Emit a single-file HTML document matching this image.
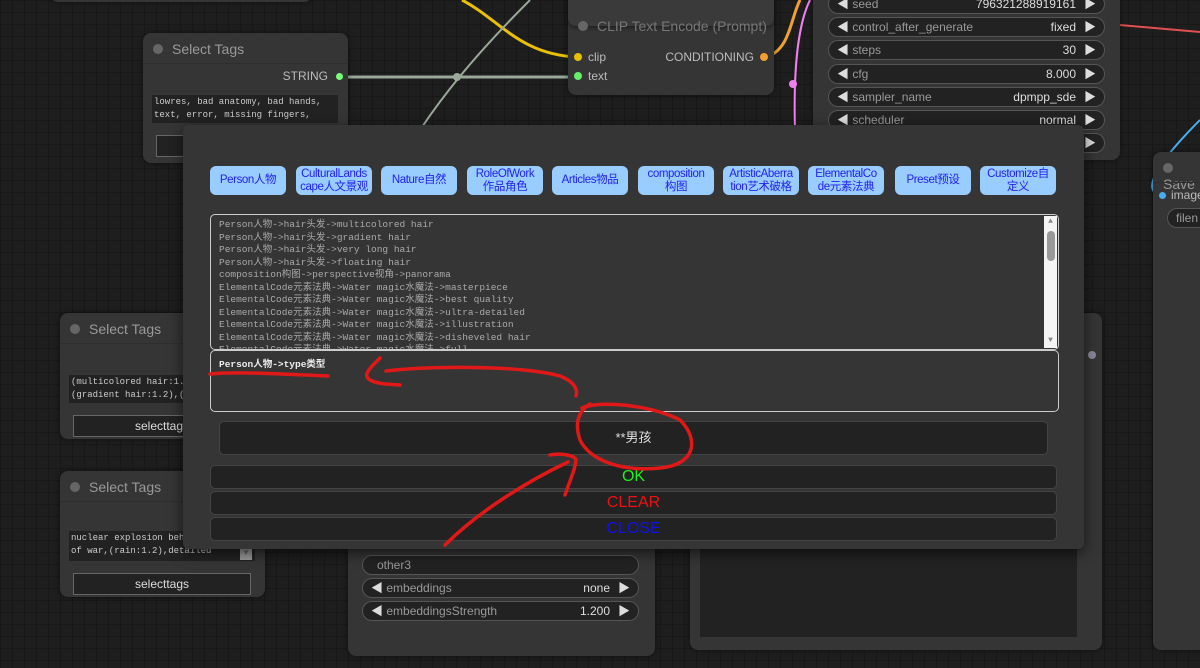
<!DOCTYPE html>
<html><head><meta charset="utf-8">
<style>
*{box-sizing:border-box;margin:0;padding:0}
body{width:1200px;height:668px;overflow:hidden;position:relative;background:#1e1e1e;
background-image:linear-gradient(#181818 1px,transparent 1px),linear-gradient(90deg,#181818 1px,transparent 1px);background-size:12px 12px;
font-family:"Liberation Sans","Noto Sans CJK SC",sans-serif;color:#aaa}
.abs{position:absolute}
.node{position:absolute;background:#353535;border-radius:8px;box-shadow:0 0 6px rgba(0,0,0,.5)}
.title{position:absolute;left:10px;top:8px;font-size:14px;color:#999}
.title:before{content:"";display:inline-block;width:10px;height:10px;border-radius:50%;background:#666;margin-right:9px;vertical-align:0}
.w{position:absolute;height:20px;border-radius:10px;background:#222;border:1px solid #555;font-size:12px;color:#999;line-height:18px;padding:0 8px}
.w .l:before{content:"◀ ";color:#ddd}
.w .v{position:absolute;right:28px;top:0;color:#ddd}
.w .r{position:absolute;right:8px;top:0;color:#ddd}
.mono{font-family:"Liberation Mono","Noto Sans CJK SC",monospace}
.btn{position:absolute;top:166px;width:76px;height:29px;background:#99ccff;border-radius:6px;color:#2222ee;font-size:11.5px;line-height:13px;text-align:center;display:flex;align-items:center;justify-content:center;letter-spacing:-.4px}
.bar{position:absolute;left:210px;width:847px;height:24px;background:#222;border:1px solid #444;border-radius:5px;text-align:center;font-size:16px;line-height:22px;padding-left:0}
</style></head><body>

<svg class="abs" style="left:0;top:0" width="1200" height="668">
<path d="M462 0 C500 20,520 55,578 57" stroke="#e8c000" stroke-width="3" fill="none"/>
<path d="M340 77 L578 77" stroke="#9aa89a" stroke-width="3" fill="none"/>
<path d="M530 0 C470 60,440 100,420 130" stroke="#9aa89a" stroke-width="2" fill="none"/>
<circle cx="457" cy="77" r="4" fill="#9aa89a"/>
<path d="M766 57 C790 50,790 20,800 0" stroke="#f0a030" stroke-width="3" fill="none"/>
<path d="M795 130 C793 60,800 20,810 0" stroke="#f080f0" stroke-width="2" fill="none"/>
<circle cx="793" cy="84" r="4" fill="#f080f0"/>
<path d="M1120 25 L1200 32" stroke="#e05050" stroke-width="2" fill="none"/>
<path d="M1160 195 C1140 190,1160 160,1200 120" stroke="#4aaeee" stroke-width="2" fill="none"/>
</svg>

<div class="node" style="left:50px;top:-20px;width:262px;height:22px"></div>

<div class="node" style="left:143px;top:33px;width:205px;height:130px">
 <div class="title">Select Tags</div>
 <div class="abs" style="left:0;top:30px;width:100%;border-top:1px solid #2e2e2e"></div>
 <div class="abs" style="right:20px;top:36px;font-size:12px;color:#bbb">STRING</div>
 <div class="abs" style="right:5px;top:40px;width:7px;height:7px;border-radius:50%;background:#7f7"></div>
 <div class="abs mono" style="left:9px;top:62px;width:186px;height:28px;background:#222;font-size:9px;line-height:13px;color:#ccc;padding:1px 2px">lowres, bad anatomy, bad hands,<br>text, error, missing fingers,</div>
 <div class="abs" style="left:13px;top:102px;width:80px;height:22px;border:1px solid #666;background:#222"></div>
</div>

<div class="node" style="left:568px;top:-10px;width:206px;height:105px">
 <div class="abs" style="left:0;top:0;width:206px;height:36px;background:#3a3a3a;border-radius:8px;box-shadow:0 2px 4px rgba(0,0,0,.4)"></div>
 <div class="title" style="top:28px;color:#777">CLIP Text Encode (Prompt)</div>
 <div class="abs" style="left:6px;top:63px;width:8px;height:8px;border-radius:50%;background:#e8c000"></div>
 <div class="abs" style="left:20px;top:60px;font-size:12px;color:#bbb">clip</div>
 <div class="abs" style="left:6px;top:82px;width:8px;height:8px;border-radius:50%;background:#6e6"></div>
 <div class="abs" style="left:20px;top:79px;font-size:12px;color:#bbb">text</div>
 <div class="abs" style="right:20px;top:60px;font-size:12px;color:#bbb">CONDITIONING</div>
 <div class="abs" style="right:6px;top:63px;width:8px;height:8px;border-radius:50%;background:#f0a030"></div>
</div>

<div class="node" style="left:813px;top:-10px;width:307px;height:170px">
 <div class="w" style="left:15px;top:4px;width:277px"><span class="l">seed</span><span class="v">796321288919161</span><span class="r">▶</span></div>
 <div class="w" style="left:15px;top:27px;width:277px"><span class="l">control_after_generate</span><span class="v">fixed</span><span class="r">▶</span></div>
 <div class="w" style="left:15px;top:50px;width:277px"><span class="l">steps</span><span class="v">30</span><span class="r">▶</span></div>
 <div class="w" style="left:15px;top:74px;width:277px"><span class="l">cfg</span><span class="v">8.000</span><span class="r">▶</span></div>
 <div class="w" style="left:15px;top:97px;width:277px"><span class="l">sampler_name</span><span class="v">dpmpp_sde</span><span class="r">▶</span></div>
 <div class="w" style="left:15px;top:120px;width:277px"><span class="l">scheduler</span><span class="v">normal</span><span class="r">▶</span></div>
 <div class="w" style="left:15px;top:143px;width:277px"><span class="l">denoise</span><span class="v">1.000</span><span class="r">▶</span></div>
</div>

<div class="node" style="left:1153px;top:152px;width:60px;height:498px">
 <div class="title" style="font-size:14px">Save</div>
 <div class="abs" style="left:0;top:30px;width:100%;border-top:1px solid #2e2e2e"></div>
 <div class="abs" style="left:6px;top:40px;width:7px;height:7px;border-radius:50%;background:#4aaeee"></div>
 <div class="abs" style="left:18px;top:36px;font-size:12px;color:#bbb">image</div>
 <div class="w" style="left:14px;top:56px;width:60px">filen</div>
</div>

<div class="node" style="left:60px;top:313px;width:205px;height:126px">
 <div class="title">Select Tags</div>
 <div class="abs" style="left:0;top:30px;width:100%;border-top:1px solid #2e2e2e"></div>
 <div class="abs mono" style="left:9px;top:62px;width:186px;height:28px;background:#222;font-size:9px;line-height:13px;color:#ccc;padding:1px 2px;overflow:hidden">(multicolored hair:1.2),<br>(gradient hair:1.2),(v</div>
 <div class="abs" style="left:13px;top:102px;width:178px;height:22px;border:1px solid #666;background:#222;text-align:center;font-size:12px;color:#ddd;line-height:20px">selecttags</div>
</div>

<div class="node" style="left:60px;top:471px;width:205px;height:126px">
 <div class="title">Select Tags</div>
 <div class="abs" style="left:0;top:30px;width:100%;border-top:1px solid #2e2e2e"></div>
 <div class="abs mono" style="left:9px;top:60px;width:186px;height:30px;background:#222;font-size:9px;line-height:13px;color:#ccc;padding:1px 2px;overflow:hidden">nuclear explosion behi<br>of war,(rain:1.2),detailed</div>
 <div class="abs" style="left:180px;top:77px;width:12px;height:12px;background:#999;color:#666;font-size:8px;text-align:center">▼</div>
 <div class="abs" style="left:13px;top:102px;width:178px;height:22px;border:1px solid #666;background:#222;text-align:center;font-size:12px;color:#ddd;line-height:20px">selecttags</div>
</div>

<div class="node" style="left:348px;top:440px;width:307px;height:216px">
 <div class="w" style="left:14px;top:115px;width:277px;padding-left:14px">other3</div>
 <div class="w" style="left:14px;top:138px;width:277px"><span class="l">embeddings</span><span class="v">none</span><span class="r">▶</span></div>
 <div class="w" style="left:14px;top:161px;width:277px"><span class="l">embeddingsStrength</span><span class="v">1.200</span><span class="r">▶</span></div>
</div>

<div class="node" style="left:690px;top:313px;width:412px;height:337px">
 <div class="abs" style="right:6px;top:38px;width:8px;height:8px;border-radius:50%;background:#889"></div>
 <div class="abs" style="left:10px;top:62px;width:377px;height:262px;background:#222"></div>
</div>

<div class="abs" style="left:183px;top:125px;width:901px;height:424px;background:#353535;border-radius:6px;box-shadow:0 4px 14px rgba(0,0,0,.6)"></div>
<div class="btn" style="left:210px">Person人物</div>
<div class="btn" style="left:296px">CulturalLands<br>cape人文景观</div>
<div class="btn" style="left:381px">Nature自然</div>
<div class="btn" style="left:467px">RoleOfWork<br>作品角色</div>
<div class="btn" style="left:552px">Articles物品</div>
<div class="btn" style="left:638px">composition<br>构图</div>
<div class="btn" style="left:723px">ArtisticAberra<br>tion艺术破格</div>
<div class="btn" style="left:808px">ElementalCo<br>de元素法典</div>
<div class="btn" style="left:895px">Preset预设</div>
<div class="btn" style="left:980px">Customize自<br>定义</div>

<div class="abs mono" style="left:210px;top:214px;width:849px;height:136px;border:1px solid #ccc;border-radius:5px;background:#353535;font-size:9.5px;line-height:12.55px;color:#aaa;padding:4px 8px;overflow:hidden;white-space:nowrap">
Person人物->hair头发->multicolored hair<br>Person人物->hair头发->gradient hair<br>Person人物->hair头发->very long hair<br>Person人物->hair头发->floating hair<br>composition构图->perspective视角->panorama<br>ElementalCode元素法典->Water magic水魔法->masterpiece<br>ElementalCode元素法典->Water magic水魔法->best quality<br>ElementalCode元素法典->Water magic水魔法->ultra-detailed<br>ElementalCode元素法典->Water magic水魔法->illustration<br>ElementalCode元素法典->Water magic水魔法->disheveled hair<br>ElementalCode元素法典->Water magic水魔法->full
<div class="abs" style="right:1px;top:1px;width:13px;height:132px;background:#f4f4f4"><div style="color:#888;font-size:8px;text-align:center">▲</div><div style="margin:2px auto;width:8px;height:30px;background:#999;border-radius:4px"></div><div style="position:absolute;bottom:0;width:13px;color:#888;font-size:8px;text-align:center">▼</div></div>
</div>
<div class="abs mono" style="left:210px;top:350px;width:849px;height:62px;border:1px solid #ccc;border-radius:5px;background:#353535;font-size:9.5px;color:#eee;font-weight:bold;padding:5px 8px">Person人物->type类型</div>
<div class="abs" style="left:219px;top:421px;width:829px;height:34px;background:#222;border:1px solid #444;border-radius:5px;text-align:center;font-size:13px;line-height:32px;color:#ddd">**男孩</div>
<div class="bar" style="top:465px;color:#22ee22">OK</div>
<div class="bar" style="top:491px;color:#ee1111">CLEAR</div>
<div class="bar" style="top:517px;color:#1111ee">CLOSE</div>

<svg class="abs" style="left:0;top:0" width="1200" height="668">
<g stroke="#e01818" stroke-width="3.5" fill="none" stroke-linecap="round">
<path d="M210 374 C240 371,300 375,328 376"/>
<path d="M380 358 C370 368,362 375,370 380 C380 385,390 384,400 385"/>
<path d="M386 371 C430 366,520 365,560 376 C575 382,578 390,576 396"/>
<path d="M582 408 C600 400,650 405,680 420 C700 440,695 465,660 468 C620 472,590 460,580 440 C575 425,577 412,590 404"/>
<path d="M445 545 C480 510,530 480,568 462"/>
<path d="M550 455 C560 453,575 455,576 460 C575 470,570 480,565 495"/>
</g>
</svg>
</body></html>
